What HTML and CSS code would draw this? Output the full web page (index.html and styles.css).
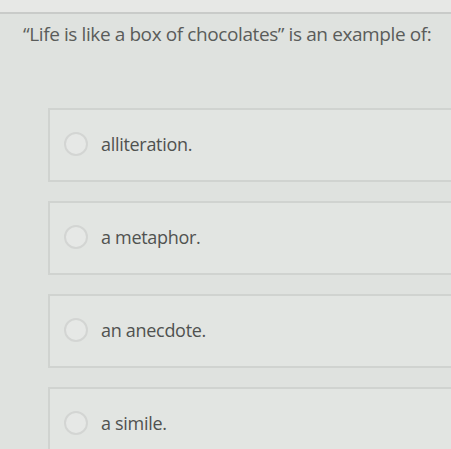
FILE: index.html
```html
<!DOCTYPE html>
<html lang="en">
<head>
    <meta charset="UTF-8">
    <meta name="viewport" content="width=device-width, initial-scale=1.0">
    <title>Question</title>
    <link rel="stylesheet" href="styles.css">
</head>
<body>
    <div class="topbar"></div>
    <div class="question">
        <p class="prompt">“Life is like a box of chocolates” is an example of:</p>
    </div>
    <div class="choices">
        <label class="choice"><span class="radio"></span><span class="label">alliteration.</span></label>
        <label class="choice"><span class="radio"></span><span class="label">a metaphor.</span></label>
        <label class="choice"><span class="radio"></span><span class="label">an anecdote.</span></label>
        <label class="choice"><span class="radio"></span><span class="label">a simile.</span></label>
    </div>
</body>
</html>
```

FILE: styles.css
```css
body, html {
    margin: 0;
    padding: 0;
    height: 100%;
    overflow: hidden;
    background: #dfe2df;
    color: #5a5c5a;
    font-family: 'Open Sans', sans-serif;
}

.topbar {
    height: 12px;
    background: #e7e8e6;
    border-bottom: 2px solid #c9cbc9;
}

.question {
    padding: 8px 0 0 23px;
    height: 86px;
}

.prompt {
    margin: 0;
    font-size: 19px;
    letter-spacing: -0.4px;
    line-height: 24px;
}

.choices {
    display: flex;
    flex-direction: column;
    gap: 19px;
    margin-left: 48px;
    margin-right: -20px;
}

.choice {
    box-sizing: border-box;
    display: flex;
    align-items: center;
    height: 74px;
    padding-left: 14px;
    padding-bottom: 2px;
    border: 2px solid #d0d3d0;
    border-right: none;
    background: #e2e5e2;
}

.radio {
    width: 20px;
    height: 20px;
    border: 2px solid #d3d5d3;
    border-radius: 50%;
    background: #e6e8e6;
    margin-right: 13px;
}

.label {
    font-size: 18px;
    letter-spacing: -0.3px;
    color: #505250;
}
```
